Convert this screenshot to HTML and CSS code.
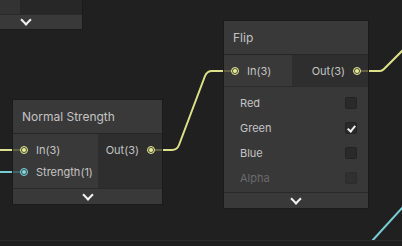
FILE: index.html
```html
<!DOCTYPE html>
<html lang="en">
<head>
    <meta charset="UTF-8">
    <meta name="viewport" content="width=device-width, initial-scale=1.0">
    <title>Shader Graph</title>
    <link rel="stylesheet" href="styles.css">
</head>
<body>
    <div class="graph">
        <!-- wires between ports -->
        <svg class="wires" width="402" height="246" viewBox="0 0 402 246">
            <path class="wire yellow" d="M0 150 H14"/>
            <path class="wire cyan" d="M0 172 H14"/>
            <path class="wire yellow" d="M161 150 H172 Q177 150 179 145 L205 76 Q207 71 212 71 H225"/>
            <path class="wire yellow" d="M367 71 H380 Q382 71 384 69 L403 50"/>
            <path class="wire cyan" d="M372 241 L403 207"/>
        </svg>

        <!-- node cut off at the top left -->
        <div class="node node-cut">
            <div class="ports">
                <div class="inputs">
                    <div class="port"><span class="label">In(4)</span></div>
                </div>
                <div class="outputs"></div>
            </div>
            <div class="footer"><span class="chevron"></span></div>
        </div>

        <div class="node node-normal">
            <div class="title">Normal Strength</div>
            <div class="ports">
                <div class="inputs">
                    <div class="port"><span class="stub yellow"></span><span class="dot yellow"></span><span class="label">In(3)</span></div>
                    <div class="port"><span class="stub cyan"></span><span class="dot cyan"></span><span class="label">Strength(1)</span></div>
                </div>
                <div class="outputs">
                    <div class="port out"><span class="label">Out(3)</span><span class="dot yellow"></span><span class="stub yellow"></span></div>
                </div>
            </div>
            <div class="footer"><span class="chevron"></span></div>
        </div>

        <div class="node node-flip">
            <div class="title">Flip</div>
            <div class="ports">
                <div class="inputs">
                    <div class="port"><span class="stub yellow"></span><span class="dot yellow"></span><span class="label">In(3)</span></div>
                </div>
                <div class="outputs">
                    <div class="port out"><span class="label">Out(3)</span><span class="dot yellow"></span><span class="stub yellow"></span></div>
                </div>
            </div>
            <div class="controls">
                <div class="toggle"><span>Red</span><span class="check"></span></div>
                <div class="toggle"><span>Green</span><span class="check on"></span></div>
                <div class="toggle"><span>Blue</span><span class="check"></span></div>
                <div class="toggle disabled"><span>Alpha</span><span class="check"></span></div>
            </div>
            <div class="footer"><span class="chevron"></span></div>
        </div>

        <div class="bottom-bar"></div>
    </div>
</body>
</html>
```

FILE: styles.css
```css
body {
    margin: 0;
    background-color: #202020;
    font-family: Inter, "Noto Sans", sans-serif;
}
.graph {
    position: relative;
    width: 402px;
    height: 246px;
    overflow: hidden;
    background-color: #202020;
}
.wires {
    position: absolute;
    left: 0;
    top: 0;
}
.wire {
    fill: none;
    stroke-width: 2;
    stroke-linejoin: round;
}
.wire.yellow {
    stroke: #dde28a;
}
.wire.cyan {
    stroke: #78ccd3;
}
.node {
    position: absolute;
    display: flex;
    flex-direction: column;
    background-color: #393939;
    box-shadow: 0 0 0 1px #1b1b1b;
    color: #c4c4c4;
}
.node-cut {
    left: -30px;
    top: -20px;
    width: 112px;
}
.node-normal {
    left: 13px;
    top: 100px;
    width: 149px;
}
.node-flip {
    left: 224px;
    top: 21px;
    width: 144px;
}
.title {
    height: 33px;
    padding-left: 9px;
    display: flex;
    align-items: center;
    font-size: 12px;
    background-color: #393939;
    border-bottom: 1px solid #262626;
}
.ports {
    display: flex;
    background-color: #2e2e2e;
}
.node-normal .ports {
    height: 54px;
}
.node-flip .ports {
    height: 31px;
}
.node-cut .ports {
    height: 34px;
}
.inputs {
    background-color: #393939;
    padding-top: 5px;
}
.node-normal .inputs {
    width: 85px;
}
.node-flip .inputs {
    width: 68px;
}
.node-cut .inputs {
    width: 50px;
    background-color: #333333;
}
.node-cut .outputs {
    background-color: #272727;
}
.outputs {
    flex: 1;
    padding-top: 5px;
    display: flex;
    flex-direction: column;
    align-items: flex-end;
}
.port {
    position: relative;
    height: 22px;
    display: flex;
    align-items: center;
    padding-left: 7px;
    font-size: 11px;
}
.port.out {
    padding-left: 0;
    padding-right: 7px;
}
.node-cut .port {
    height: 6px;
    justify-content: flex-end;
    padding-right: 10px;
    align-items: flex-end;
    margin-top: -11px;
}
.node-cut .port .label {
    margin-left: 0;
}
.dot {
    position: relative;
    width: 8px;
    height: 8px;
    box-sizing: border-box;
    border-radius: 50%;
    border: 1px solid;
    display: flex;
    align-items: center;
    justify-content: center;
    z-index: 1;
}
.dot::after {
    content: "";
    width: 4px;
    height: 4px;
    border-radius: 50%;
    background-color: currentColor;
}
.dot.yellow {
    color: #e6eb95;
    border-color: #e6eb95;
    background-color: #4a4b35;
}
.dot.cyan {
    color: #84d8df;
    border-color: #84d8df;
    background-color: #2f4a4c;
}
.stub {
    position: absolute;
    top: 10px;
    height: 2px;
    width: 8px;
    left: 0;
}
.port.out .stub {
    left: auto;
    right: 0;
}
.stub.yellow {
    background-color: #5e6042;
}
.stub.cyan {
    background-color: #3d6366;
}
.label {
    margin-left: 8px;
    white-space: nowrap;
}
.port.out .label {
    margin-left: 0;
    margin-right: 8px;
}
.controls {
    height: 106px;
    padding: 3px 11px 0 16px;
    box-sizing: border-box;
    background-color: #383838;
    border-top: 1px solid #2c2c2c;
}
.toggle {
    height: 25px;
    display: flex;
    align-items: center;
    justify-content: space-between;
    font-size: 11px;
    color: #c4c4c4;
}
.toggle.disabled {
    color: #6a6a6a;
}
.check {
    width: 12px;
    height: 12px;
    box-sizing: border-box;
    border-radius: 2px;
    background-color: #2a2a2a;
    border: 1px solid #232323;
    position: relative;
}
.check.on::after {
    content: "";
    position: absolute;
    left: 3px;
    top: 1px;
    width: 3px;
    height: 6px;
    border-right: 2px solid #eeeeee;
    border-bottom: 2px solid #eeeeee;
    transform: rotate(40deg);
}
.toggle.disabled .check {
    background-color: #303030;
    border-color: #2c2c2c;
}
.footer {
    height: 16px;
    box-sizing: border-box;
    border-top: 1px solid #2a2a2a;
    background-color: #393939;
    display: flex;
    justify-content: center;
    align-items: center;
}
.chevron {
    width: 6px;
    height: 6px;
    border-right: 2px solid #f2f2f2;
    border-bottom: 2px solid #f2f2f2;
    transform: translateY(-2px) rotate(45deg);
}
.node-cut .footer {
    height: 15px;
}
.bottom-bar {
    position: absolute;
    left: 0;
    bottom: 0;
    width: 100%;
    height: 5px;
    background-color: #1e1e1e;
    border-top: 1px solid #2a2a2a;
}
```
